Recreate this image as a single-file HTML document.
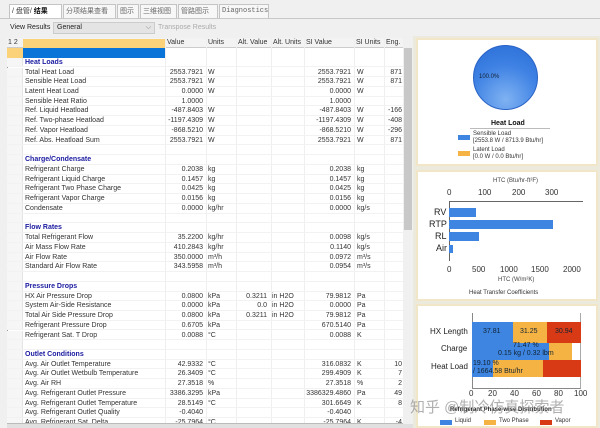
<!DOCTYPE html>
<html><head><meta charset="utf-8"><style>
*{margin:0;padding:0;box-sizing:border-box}
body{width:600px;height:428px;overflow:hidden;background:#f0f0f0;font-family:"Liberation Sans","Noto Sans CJK SC",sans-serif;font-size:7px;color:#333;position:relative}
.a{position:absolute;white-space:nowrap}
.r{position:absolute;left:7px;width:396px;height:9.74px;line-height:9.74px;border-bottom:1px solid #f2f2f2}
.r span{position:absolute;top:0}
.n{left:18px}
.v{right:200px;text-align:right}
.u{left:201px}
.av{right:136px}
.au{left:265px}
.sv{right:52px}
.su{left:350px}
.e{right:1px}
.h{color:#1a1aa0;font-weight:bold}
.rh{position:absolute;left:0;top:0;width:16px;height:100%;border-right:1px solid #e4e4e4;background:#f6f6f6}
.panel{position:absolute;left:416px;width:182px;background:#fff;border:2px solid #f1e6c8}
.tab{position:absolute;top:4px;height:14px;border:1px solid #c4c4c4;border-bottom:none;background:#f7f7f7;font-size:7px;line-height:13px;color:#666;padding:0 2px;overflow:hidden}
</style></head><body>
<!-- tabs -->
<div class="a" style="left:0;top:0;width:600px;height:19px;background:#f0f0f0;border-bottom:1px solid #c8c8c8"></div>
<div class="tab" style="left:9px;width:53px;background:#fff;color:#333">/ 盘管/ <b style="color:#111">结果</b></div>
<div class="tab" style="left:63px;width:53px">分项结果查看</div>
<div class="tab" style="left:117px;width:22px">图示</div>
<div class="tab" style="left:140px;width:37px">三维视图</div>
<div class="tab" style="left:178px;width:40px">管路图示</div>
<div class="tab" style="left:219px;width:50px;font-family:'Liberation Mono',monospace;font-size:7px">Diagnostics</div>
<div class="a" style="left:7px;top:19px;width:593px;height:18px;background:#f0f0f0"></div>
<div class="a" style="left:10px;top:24px;font-size:7px;color:#222">View Results</div>
<div class="a" style="left:53px;top:22px;width:102px;height:12px;background:#e4e4e4;border:1px solid #ccc;font-size:7px;line-height:10px;padding-left:3px;color:#222">General<span style="position:absolute;right:3px;color:#777">⌵</span></div>
<div class="a" style="left:158px;top:24px;color:#aaa">Transpose Results</div>
<!-- grid -->
<div class="a" style="left:7px;top:38px;width:406px;height:390px;background:#fff;border-left:1px solid #999"></div>
<div class="a" style="left:7px;top:38px;width:396px;height:10px;background:#f3f3f3;border-bottom:1px solid #ccc"></div>
<div class="a" style="left:8px;top:39px">1 2</div>
<div class="a" style="left:23px;top:39px;width:142px;height:9px;background:#fbd27a"></div>
<div class="a" style="left:167px;top:39px">Value</div>
<div class="a" style="left:208px;top:39px">Units</div>
<div class="a" style="left:238px;top:39px">Alt. Value</div>
<div class="a" style="left:273px;top:39px">Alt. Units</div>
<div class="a" style="left:306px;top:39px">SI Value</div>
<div class="a" style="left:356px;top:39px">SI Units</div>
<div class="a" style="left:386px;top:39px">Eng.</div>
<div class="a" style="left:7px;top:48px;width:16px;height:10px;background:#fbd27a"></div>
<div class="a" style="left:23px;top:48px;width:142px;height:10px;background:#0a74d9"></div>
<!-- column lines -->
<div class="a" style="left:165px;top:38px;width:1px;height:390px;background:#efefef"></div>
<div class="a" style="left:206px;top:38px;width:1px;height:390px;background:#efefef"></div>
<div class="a" style="left:236px;top:38px;width:1px;height:390px;background:#efefef"></div>
<div class="a" style="left:271px;top:38px;width:1px;height:390px;background:#efefef"></div>
<div class="a" style="left:304px;top:38px;width:1px;height:390px;background:#efefef"></div>
<div class="a" style="left:354px;top:38px;width:1px;height:390px;background:#efefef"></div>
<div class="a" style="left:384px;top:38px;width:1px;height:390px;background:#efefef"></div>

<div class="r" style="top:57.7px"><div class="rh"></div><span class="n h">Heat Loads</span></div>
<div class="r" style="top:67.5px"><div class="rh"></div><span class="n">Total Heat Load</span><span class="v">2553.7921</span><span class="u">W</span><span class="sv">2553.7921</span><span class="su">W</span><span class="e">871</span></div>
<div class="r" style="top:77.2px"><div class="rh"></div><span class="n">Sensible Heat Load</span><span class="v">2553.7921</span><span class="u">W</span><span class="sv">2553.7921</span><span class="su">W</span><span class="e">871</span></div>
<div class="r" style="top:87px"><div class="rh"></div><span class="n">Latent Heat Load</span><span class="v">0.0000</span><span class="u">W</span><span class="sv">0.0000</span><span class="su">W</span></div>
<div class="r" style="top:96.7px"><div class="rh"></div><span class="n">Sensible Heat Ratio</span><span class="v">1.0000</span><span class="sv">1.0000</span></div>
<div class="r" style="top:106.4px"><div class="rh"></div><span class="n">Ref. Liquid Heatload</span><span class="v">-487.8403</span><span class="u">W</span><span class="sv">-487.8403</span><span class="su">W</span><span class="e">-166</span></div>
<div class="r" style="top:116.2px"><div class="rh"></div><span class="n">Ref. Two-phase Heatload</span><span class="v">-1197.4309</span><span class="u">W</span><span class="sv">-1197.4309</span><span class="su">W</span><span class="e">-408</span></div>
<div class="r" style="top:125.9px"><div class="rh"></div><span class="n">Ref. Vapor Heatload</span><span class="v">-868.5210</span><span class="u">W</span><span class="sv">-868.5210</span><span class="su">W</span><span class="e">-296</span></div>
<div class="r" style="top:135.7px"><div class="rh"></div><span class="n">Ref. Abs. Heatload Sum</span><span class="v">2553.7921</span><span class="u">W</span><span class="sv">2553.7921</span><span class="su">W</span><span class="e">871</span></div>
<div class="r" style="top:145.4px"><div class="rh"></div></div>
<div class="r" style="top:155.1px"><div class="rh"></div><span class="n h">Charge/Condensate</span></div>
<div class="r" style="top:164.9px"><div class="rh"></div><span class="n">Refrigerant Charge</span><span class="v">0.2038</span><span class="u">kg</span><span class="sv">0.2038</span><span class="su">kg</span></div>
<div class="r" style="top:174.6px"><div class="rh"></div><span class="n">Refrigerant Liquid Charge</span><span class="v">0.1457</span><span class="u">kg</span><span class="sv">0.1457</span><span class="su">kg</span></div>
<div class="r" style="top:184.4px"><div class="rh"></div><span class="n">Refrigerant Two Phase Charge</span><span class="v">0.0425</span><span class="u">kg</span><span class="sv">0.0425</span><span class="su">kg</span></div>
<div class="r" style="top:194.1px"><div class="rh"></div><span class="n">Refrigerant Vapor Charge</span><span class="v">0.0156</span><span class="u">kg</span><span class="sv">0.0156</span><span class="su">kg</span></div>
<div class="r" style="top:203.8px"><div class="rh"></div><span class="n">Condensate</span><span class="v">0.0000</span><span class="u">kg/hr</span><span class="sv">0.0000</span><span class="su">kg/s</span></div>
<div class="r" style="top:213.6px"><div class="rh"></div></div>
<div class="r" style="top:223.3px"><div class="rh"></div><span class="n h">Flow Rates</span></div>
<div class="r" style="top:233.1px"><div class="rh"></div><span class="n">Total Refrigerant Flow</span><span class="v">35.2200</span><span class="u">kg/hr</span><span class="sv">0.0098</span><span class="su">kg/s</span></div>
<div class="r" style="top:242.8px"><div class="rh"></div><span class="n">Air Mass Flow Rate</span><span class="v">410.2843</span><span class="u">kg/hr</span><span class="sv">0.1140</span><span class="su">kg/s</span></div>
<div class="r" style="top:252.5px"><div class="rh"></div><span class="n">Air Flow Rate</span><span class="v">350.0000</span><span class="u">m³/h</span><span class="sv">0.0972</span><span class="su">m³/s</span></div>
<div class="r" style="top:262.3px"><div class="rh"></div><span class="n">Standard Air Flow Rate</span><span class="v">343.5958</span><span class="u">m³/h</span><span class="sv">0.0954</span><span class="su">m³/s</span></div>
<div class="r" style="top:272px"><div class="rh"></div></div>
<div class="r" style="top:281.8px"><div class="rh"></div><span class="n h">Pressure Drops</span></div>
<div class="r" style="top:291.5px"><div class="rh"></div><span class="n">HX Air Pressure Drop</span><span class="v">0.0800</span><span class="u">kPa</span><span class="av">0.3211</span><span class="au">in H2O</span><span class="sv">79.9812</span><span class="su">Pa</span></div>
<div class="r" style="top:301.2px"><div class="rh"></div><span class="n">System Air-Side Resistance</span><span class="v">0.0000</span><span class="u">kPa</span><span class="av">0.0</span><span class="au">in H2O</span><span class="sv">0.0000</span><span class="su">Pa</span></div>
<div class="r" style="top:311px"><div class="rh"></div><span class="n">Total Air Side Pressure Drop</span><span class="v">0.0800</span><span class="u">kPa</span><span class="av">0.3211</span><span class="au">in H2O</span><span class="sv">79.9812</span><span class="su">Pa</span></div>
<div class="r" style="top:320.7px"><div class="rh"></div><span class="n">Refrigerant Pressure Drop</span><span class="v">0.6705</span><span class="u">kPa</span><span class="sv">670.5140</span><span class="su">Pa</span></div>
<div class="r" style="top:330.5px"><div class="rh"></div><span class="n">Refrigerant Sat. T Drop</span><span class="v">0.0088</span><span class="u">°C</span><span class="sv">0.0088</span><span class="su">K</span></div>
<div class="r" style="top:340.2px"><div class="rh"></div></div>
<div class="r" style="top:349.9px"><div class="rh"></div><span class="n h">Outlet Conditions</span></div>
<div class="r" style="top:359.7px"><div class="rh"></div><span class="n">Avg. Air Outlet Temperature</span><span class="v">42.9332</span><span class="u">°C</span><span class="sv">316.0832</span><span class="su">K</span><span class="e">10</span></div>
<div class="r" style="top:369.4px"><div class="rh"></div><span class="n">Avg. Air Outlet Wetbulb Temperature</span><span class="v">26.3409</span><span class="u">°C</span><span class="sv">299.4909</span><span class="su">K</span><span class="e">7</span></div>
<div class="r" style="top:379.2px"><div class="rh"></div><span class="n">Avg. Air RH</span><span class="v">27.3518</span><span class="u">%</span><span class="sv">27.3518</span><span class="su">%</span><span class="e">2</span></div>
<div class="r" style="top:388.9px"><div class="rh"></div><span class="n">Avg. Refrigerant Outlet Pressure</span><span class="v">3386.3295</span><span class="u">kPa</span><span class="sv">3386329.4860</span><span class="su">Pa</span><span class="e">49</span></div>
<div class="r" style="top:398.6px"><div class="rh"></div><span class="n">Avg. Refrigerant Outlet Temperature</span><span class="v">28.5149</span><span class="u">°C</span><span class="sv">301.6649</span><span class="su">K</span><span class="e">8</span></div>
<div class="r" style="top:408.4px"><div class="rh"></div><span class="n">Avg. Refrigerant Outlet Quality</span><span class="v">-0.4040</span><span class="sv">-0.4040</span></div>
<div class="r" style="top:418.1px"><div class="rh"></div><span class="n">Avg. Refrigerant Sat. Delta</span><span class="v">-25.7964</span><span class="u">°C</span><span class="sv">-25.7964</span><span class="su">K</span><span class="e">-4</span></div>
<div class="a" style="left:7px;top:423px;width:406px;height:5px;background:#e0e0e0;border-top:1px solid #bbb"></div>
<!-- vscroll -->
<div class="a" style="left:403px;top:38px;width:10px;height:386px;background:#f0f0f0"></div>
<div class="a" style="left:404px;top:48px;width:8px;height:182px;background:#c8c8c8"></div>
<!-- panels -->
<div class="a" style="left:413px;top:36px;width:187px;height:392px;background:#ece9dd"></div>
<div class="panel" style="top:38px;height:128px"></div>
<div class="a" style="left:473px;top:45px;width:65px;height:65px;border-radius:50%;background:radial-gradient(circle at 50% 85%,#7fb2f2,#3f82e4 55%,#2a6dd6);border:1px solid #2a63c6"></div>
<div class="a" style="left:479px;top:74px;font-size:6px;color:#123">100.0%</div>
<div class="a" style="left:491px;top:120px;font-size:7px;font-weight:bold;color:#111">Heat Load</div>
<div class="a" style="left:470px;top:128px;width:80px;height:1px;background:#bbb"></div>
<div class="a" style="left:458px;top:135px;width:12px;height:5px;background:#3d85e0"></div>
<div class="a" style="left:473px;top:131px;font-size:6px;line-height:7px;color:#333">Sensible Load<br>[2553.8 W / 8713.9 Btu/hr]</div>
<div class="a" style="left:458px;top:151px;width:12px;height:5px;background:#f5b343"></div>
<div class="a" style="left:473px;top:147px;font-size:6px;line-height:7px;color:#333">Latent Load<br>[0.0 W / 0.0 Btu/hr]</div>

<div class="panel" style="top:170px;height:131px"></div>
<div class="a" style="left:493px;top:178px;font-size:6px;color:#444">HTC (Btu/hr-ft²F)</div>
<div class="a" style="left:447px;top:188px;font-size:8px;color:#333">0</div>
<div class="a" style="left:478px;top:188px;font-size:8px;color:#333">100</div>
<div class="a" style="left:512px;top:188px;font-size:8px;color:#333">200</div>
<div class="a" style="left:545px;top:188px;font-size:8px;color:#333">300</div>
<div class="a" style="left:449px;top:201px;width:134px;height:1px;background:#666"></div>
<div class="a" style="left:449px;top:201px;width:1px;height:60px;background:#666"></div>
<div class="a" style="left:449px;top:208px;width:27px;height:9px;background:#3d85e0"></div>
<div class="a" style="left:449px;top:220px;width:104px;height:9px;background:#3d85e0"></div>
<div class="a" style="left:449px;top:232px;width:30px;height:9px;background:#3d85e0"></div>
<div class="a" style="left:449px;top:245px;width:4px;height:8px;background:#3d85e0"></div>
<div class="a" style="left:434px;top:207px;font-size:9px;color:#222">RV</div>
<div class="a" style="left:429px;top:219px;font-size:9px;color:#222">RTP</div>
<div class="a" style="left:435px;top:231px;font-size:9px;color:#222">RL</div>
<div class="a" style="left:436px;top:243px;font-size:9px;color:#222">Air</div>
<div class="a" style="left:447px;top:265px;font-size:8px;color:#333">0</div>
<div class="a" style="left:472px;top:265px;font-size:8px;color:#333">500</div>
<div class="a" style="left:500px;top:265px;font-size:8px;color:#333">1000</div>
<div class="a" style="left:531px;top:265px;font-size:8px;color:#333">1500</div>
<div class="a" style="left:563px;top:265px;font-size:8px;color:#333">2000</div>
<div class="a" style="left:498px;top:277px;font-size:6px;color:#444">HTC (W/m²K)</div>
<div class="a" style="left:469px;top:290px;font-size:6px;color:#333">Heat Transfer Coefficients</div>

<div class="panel" style="top:304px;height:124px"></div>
<div class="a" style="left:472px;top:313px;width:109px;height:76px;border:1px solid #888;border-top:none;border-right:1px solid #aaa"></div>
<div class="a" style="left:472px;top:322px;width:41px;height:21px;background:#3d85e0"></div>
<div class="a" style="left:513px;top:322px;width:34px;height:21px;background:#f5b343"></div>
<div class="a" style="left:547px;top:322px;width:34px;height:21px;background:#d83a16"></div>
<div class="a" style="left:472px;top:343px;width:77px;height:17px;background:#3d85e0"></div>
<div class="a" style="left:549px;top:343px;width:23px;height:17px;background:#f5b343"></div>
<div class="a" style="left:472px;top:360px;width:21px;height:17px;background:#3d85e0"></div>
<div class="a" style="left:493px;top:360px;width:50px;height:17px;background:#f5b343"></div>
<div class="a" style="left:543px;top:360px;width:38px;height:17px;background:#d83a16"></div>
<div class="a" style="left:483px;top:328px;font-size:7px;color:#123">37.81</div>
<div class="a" style="left:520px;top:328px;font-size:7px;color:#123">31.25</div>
<div class="a" style="left:555px;top:328px;font-size:7px;color:#123">30.94</div>
<div class="a" style="left:498px;top:342px;font-size:7px;line-height:8px;color:#123;text-align:center">71.47 %<br>0.15 kg / 0.32 lbm</div>
<div class="a" style="left:473px;top:360px;font-size:7px;line-height:8px;color:#123">19.10 %<br>/ 1664.58 Btu/hr</div>
<div class="a" style="left:430px;top:327px;font-size:8px;color:#222">HX Length</div>
<div class="a" style="left:441px;top:344px;font-size:8px;color:#222">Charge</div>
<div class="a" style="left:431px;top:362px;font-size:8px;color:#222">Heat Load</div>
<div class="a" style="left:469px;top:389px;font-size:8px;color:#333">0</div>
<div class="a" style="left:488px;top:389px;font-size:8px;color:#333">20</div>
<div class="a" style="left:510px;top:389px;font-size:8px;color:#333">40</div>
<div class="a" style="left:532px;top:389px;font-size:8px;color:#333">60</div>
<div class="a" style="left:554px;top:389px;font-size:8px;color:#333">80</div>
<div class="a" style="left:574px;top:389px;font-size:8px;color:#333">100</div>
<div class="a" style="left:450px;top:407px;font-size:6px;font-weight:bold;color:#222">Refrigerant Phase-wise Distribution</div>
<div class="a" style="left:440px;top:420px;width:12px;height:5px;background:#3d85e0"></div>
<div class="a" style="left:455px;top:418px;font-size:6px">Liquid</div>
<div class="a" style="left:484px;top:420px;width:12px;height:5px;background:#f5b343"></div>
<div class="a" style="left:499px;top:418px;font-size:6px">Two Phase</div>
<div class="a" style="left:540px;top:420px;width:12px;height:5px;background:#d83a16"></div>
<div class="a" style="left:555px;top:418px;font-size:6px">Vapor</div>
<!-- watermark -->
<div class="a" style="left:410px;top:396px;font-size:15px;color:rgba(150,150,150,0.75)">知乎 @制冷仿真探索者</div>
</body></html>
